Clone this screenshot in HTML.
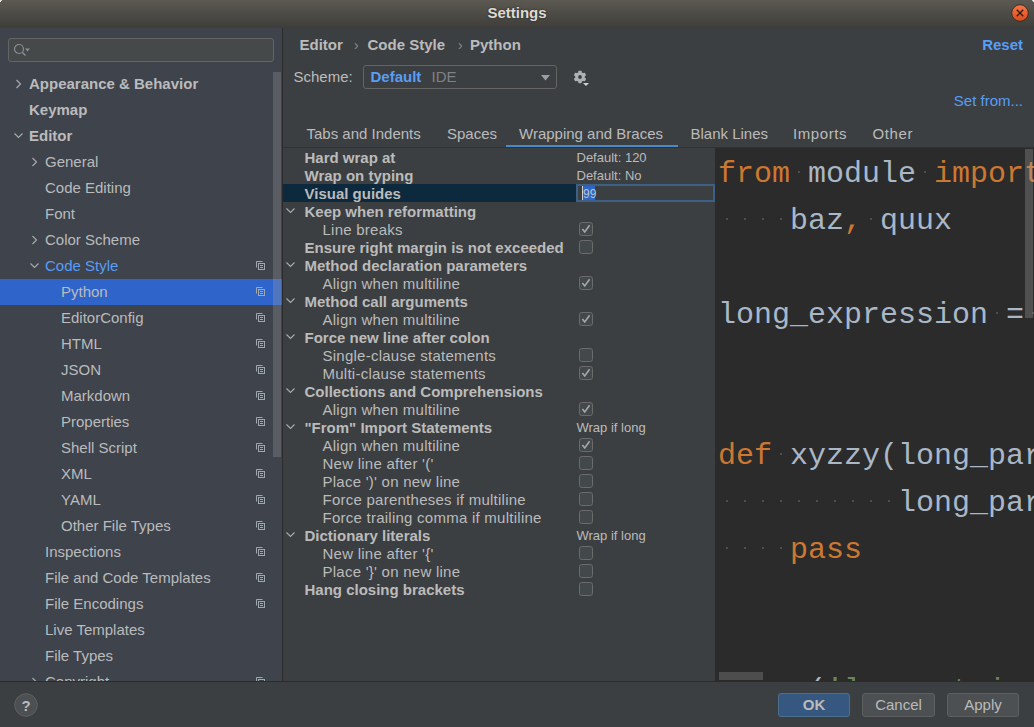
<!DOCTYPE html><html><head><meta charset="utf-8"><style>
html,body{margin:0;padding:0;width:1034px;height:727px;overflow:hidden;background:#3c3f41;}
.t{position:absolute;white-space:pre;line-height:normal;font-family:"Liberation Sans", sans-serif;}
.r{position:absolute;display:block;}
.ws{display:inline-block;width:18px;height:30px;position:relative;vertical-align:top;}
.ws i{position:absolute;left:8px;top:12px;width:2px;height:2px;background:#4e4e4e;}
</style></head><body>
<div class="r" style="left:0px;top:0px;width:1034px;height:28px;background:linear-gradient(#5b5951,#3e3d39);"></div>
<div class="t" style="left:217px;width:600px;text-align:center;top:4.42px;font-size:15px;color:#dfdbd2;font-weight:bold;text-shadow:0 0 2px #222;">Settings</div>
<svg class="r" style="left:1011px;top:4px" width="18" height="18" viewBox="0 0 18 18"><defs><linearGradient id="cg" x1="0" y1="0" x2="0" y2="1"><stop offset="0" stop-color="#f5784a"/><stop offset="1" stop-color="#dc4a1a"/></linearGradient></defs><circle cx="9" cy="9" r="8.3" fill="url(#cg)" stroke="#3a2e28" stroke-width="1"/><path d="M5.8 5.8 L12.2 12.2 M12.2 5.8 L5.8 12.2" stroke="#2a1a10" stroke-width="1.3"/></svg>
<div class="r" style="left:0px;top:0px;width:1px;height:2px;background:#e8e8e8;"></div>
<div class="r" style="left:1px;top:0px;width:1px;height:1px;background:#cfcfcf;"></div>
<div class="r" style="left:1033px;top:0px;width:1px;height:2px;background:#e8e8e8;"></div>
<div class="r" style="left:1032px;top:0px;width:1px;height:1px;background:#cfcfcf;"></div>
<div class="r" style="left:0px;top:28px;width:282px;height:653px;background:#3e434c;"></div>
<div class="r" style="left:282px;top:28px;width:1px;height:653px;background:#2b2b2b;"></div>
<div class="r" style="left:8px;top:38px;width:266px;height:24px;background:#45494a;box-sizing:border-box;border:1px solid #646464;border-radius:3px;"></div>
<svg class="r" style="left:13px;top:43px" width="20" height="16" viewBox="0 0 20 16"><circle cx="6" cy="6" r="4.5" fill="none" stroke="#8c8f93" stroke-width="1.2"/><path d="M9.2 9.2 L12.5 12.5" stroke="#8c8f93" stroke-width="1.3"/><path d="M12 5.6 L17 5.6 L14.5 8.6 Z" fill="#8c8f93"/></svg>
<div class="r" style="left:0;top:28px;width:282px;height:653px;overflow:hidden;">
<div class="t" style="left:29px;top:43px;height:26px;line-height:26px;font-size:15px;color:#bbbbbb;font-weight:bold;">Appearance &amp; Behavior</div>
<svg class="r" style="left:15px;top:51px" width="8" height="11" viewBox="0 0 8 11"><path d="M1.5 1 L5.5 5 L1.5 9" fill="none" stroke="#a6a9ad" stroke-width="1.2"/></svg>
<div class="t" style="left:29px;top:69px;height:26px;line-height:26px;font-size:15px;color:#bbbbbb;font-weight:bold;">Keymap</div>
<div class="t" style="left:29px;top:95px;height:26px;line-height:26px;font-size:15px;color:#bbbbbb;font-weight:bold;">Editor</div>
<svg class="r" style="left:14px;top:105px" width="10" height="6" viewBox="0 0 10 6"><path d="M0.5 0.5 L4.5 4.5 L8.5 0.5" fill="none" stroke="#a6a9ad" stroke-width="1.2"/></svg>
<div class="t" style="left:45px;top:121px;height:26px;line-height:26px;font-size:15px;color:#bbbbbb;">General</div>
<svg class="r" style="left:31px;top:129px" width="8" height="11" viewBox="0 0 8 11"><path d="M1.5 1 L5.5 5 L1.5 9" fill="none" stroke="#a6a9ad" stroke-width="1.2"/></svg>
<div class="t" style="left:45px;top:147px;height:26px;line-height:26px;font-size:15px;color:#bbbbbb;">Code Editing</div>
<div class="t" style="left:45px;top:173px;height:26px;line-height:26px;font-size:15px;color:#bbbbbb;">Font</div>
<div class="t" style="left:45px;top:199px;height:26px;line-height:26px;font-size:15px;color:#bbbbbb;">Color Scheme</div>
<svg class="r" style="left:31px;top:207px" width="8" height="11" viewBox="0 0 8 11"><path d="M1.5 1 L5.5 5 L1.5 9" fill="none" stroke="#a6a9ad" stroke-width="1.2"/></svg>
<div class="t" style="left:45px;top:225px;height:26px;line-height:26px;font-size:15px;color:#589df6;">Code Style</div>
<svg class="r" style="left:30px;top:235px" width="10" height="6" viewBox="0 0 10 6"><path d="M0.5 0.5 L4.5 4.5 L8.5 0.5" fill="none" stroke="#a6a9ad" stroke-width="1.2"/></svg>
<svg class="r" style="left:256px;top:233px" width="10" height="10" viewBox="0 0 10 10"><path d="M0.5 6.5 V0.5 H6.5" fill="none" stroke="#a0a8af" stroke-width="1"/><rect x="1.5" y="1.5" width="8" height="8" fill="#3e434c"/><rect x="2.5" y="2.5" width="6" height="6" fill="none" stroke="#a0a8af" stroke-width="1"/><path d="M4 4.5 H7 M4 6.5 H7" stroke="#a0a8af" stroke-width="1"/></svg>
<div class="r" style="left:0;top:251px;width:282px;height:26px;background:#2f65ca;"></div>
<div class="t" style="left:61px;top:251px;height:26px;line-height:26px;font-size:15px;color:#bbbbbb;">Python</div>
<svg class="r" style="left:256px;top:259px" width="10" height="10" viewBox="0 0 10 10"><path d="M0.5 6.5 V0.5 H6.5" fill="none" stroke="#a0a8af" stroke-width="1"/><rect x="1.5" y="1.5" width="8" height="8" fill="#2f65ca"/><rect x="2.5" y="2.5" width="6" height="6" fill="none" stroke="#a0a8af" stroke-width="1"/><path d="M4 4.5 H7 M4 6.5 H7" stroke="#a0a8af" stroke-width="1"/></svg>
<div class="t" style="left:61px;top:277px;height:26px;line-height:26px;font-size:15px;color:#bbbbbb;">EditorConfig</div>
<svg class="r" style="left:256px;top:285px" width="10" height="10" viewBox="0 0 10 10"><path d="M0.5 6.5 V0.5 H6.5" fill="none" stroke="#a0a8af" stroke-width="1"/><rect x="1.5" y="1.5" width="8" height="8" fill="#3e434c"/><rect x="2.5" y="2.5" width="6" height="6" fill="none" stroke="#a0a8af" stroke-width="1"/><path d="M4 4.5 H7 M4 6.5 H7" stroke="#a0a8af" stroke-width="1"/></svg>
<div class="t" style="left:61px;top:303px;height:26px;line-height:26px;font-size:15px;color:#bbbbbb;">HTML</div>
<svg class="r" style="left:256px;top:311px" width="10" height="10" viewBox="0 0 10 10"><path d="M0.5 6.5 V0.5 H6.5" fill="none" stroke="#a0a8af" stroke-width="1"/><rect x="1.5" y="1.5" width="8" height="8" fill="#3e434c"/><rect x="2.5" y="2.5" width="6" height="6" fill="none" stroke="#a0a8af" stroke-width="1"/><path d="M4 4.5 H7 M4 6.5 H7" stroke="#a0a8af" stroke-width="1"/></svg>
<div class="t" style="left:61px;top:329px;height:26px;line-height:26px;font-size:15px;color:#bbbbbb;">JSON</div>
<svg class="r" style="left:256px;top:337px" width="10" height="10" viewBox="0 0 10 10"><path d="M0.5 6.5 V0.5 H6.5" fill="none" stroke="#a0a8af" stroke-width="1"/><rect x="1.5" y="1.5" width="8" height="8" fill="#3e434c"/><rect x="2.5" y="2.5" width="6" height="6" fill="none" stroke="#a0a8af" stroke-width="1"/><path d="M4 4.5 H7 M4 6.5 H7" stroke="#a0a8af" stroke-width="1"/></svg>
<div class="t" style="left:61px;top:355px;height:26px;line-height:26px;font-size:15px;color:#bbbbbb;">Markdown</div>
<svg class="r" style="left:256px;top:363px" width="10" height="10" viewBox="0 0 10 10"><path d="M0.5 6.5 V0.5 H6.5" fill="none" stroke="#a0a8af" stroke-width="1"/><rect x="1.5" y="1.5" width="8" height="8" fill="#3e434c"/><rect x="2.5" y="2.5" width="6" height="6" fill="none" stroke="#a0a8af" stroke-width="1"/><path d="M4 4.5 H7 M4 6.5 H7" stroke="#a0a8af" stroke-width="1"/></svg>
<div class="t" style="left:61px;top:381px;height:26px;line-height:26px;font-size:15px;color:#bbbbbb;">Properties</div>
<svg class="r" style="left:256px;top:389px" width="10" height="10" viewBox="0 0 10 10"><path d="M0.5 6.5 V0.5 H6.5" fill="none" stroke="#a0a8af" stroke-width="1"/><rect x="1.5" y="1.5" width="8" height="8" fill="#3e434c"/><rect x="2.5" y="2.5" width="6" height="6" fill="none" stroke="#a0a8af" stroke-width="1"/><path d="M4 4.5 H7 M4 6.5 H7" stroke="#a0a8af" stroke-width="1"/></svg>
<div class="t" style="left:61px;top:407px;height:26px;line-height:26px;font-size:15px;color:#bbbbbb;">Shell Script</div>
<svg class="r" style="left:256px;top:415px" width="10" height="10" viewBox="0 0 10 10"><path d="M0.5 6.5 V0.5 H6.5" fill="none" stroke="#a0a8af" stroke-width="1"/><rect x="1.5" y="1.5" width="8" height="8" fill="#3e434c"/><rect x="2.5" y="2.5" width="6" height="6" fill="none" stroke="#a0a8af" stroke-width="1"/><path d="M4 4.5 H7 M4 6.5 H7" stroke="#a0a8af" stroke-width="1"/></svg>
<div class="t" style="left:61px;top:433px;height:26px;line-height:26px;font-size:15px;color:#bbbbbb;">XML</div>
<svg class="r" style="left:256px;top:441px" width="10" height="10" viewBox="0 0 10 10"><path d="M0.5 6.5 V0.5 H6.5" fill="none" stroke="#a0a8af" stroke-width="1"/><rect x="1.5" y="1.5" width="8" height="8" fill="#3e434c"/><rect x="2.5" y="2.5" width="6" height="6" fill="none" stroke="#a0a8af" stroke-width="1"/><path d="M4 4.5 H7 M4 6.5 H7" stroke="#a0a8af" stroke-width="1"/></svg>
<div class="t" style="left:61px;top:459px;height:26px;line-height:26px;font-size:15px;color:#bbbbbb;">YAML</div>
<svg class="r" style="left:256px;top:467px" width="10" height="10" viewBox="0 0 10 10"><path d="M0.5 6.5 V0.5 H6.5" fill="none" stroke="#a0a8af" stroke-width="1"/><rect x="1.5" y="1.5" width="8" height="8" fill="#3e434c"/><rect x="2.5" y="2.5" width="6" height="6" fill="none" stroke="#a0a8af" stroke-width="1"/><path d="M4 4.5 H7 M4 6.5 H7" stroke="#a0a8af" stroke-width="1"/></svg>
<div class="t" style="left:61px;top:485px;height:26px;line-height:26px;font-size:15px;color:#bbbbbb;">Other File Types</div>
<svg class="r" style="left:256px;top:493px" width="10" height="10" viewBox="0 0 10 10"><path d="M0.5 6.5 V0.5 H6.5" fill="none" stroke="#a0a8af" stroke-width="1"/><rect x="1.5" y="1.5" width="8" height="8" fill="#3e434c"/><rect x="2.5" y="2.5" width="6" height="6" fill="none" stroke="#a0a8af" stroke-width="1"/><path d="M4 4.5 H7 M4 6.5 H7" stroke="#a0a8af" stroke-width="1"/></svg>
<div class="t" style="left:45px;top:511px;height:26px;line-height:26px;font-size:15px;color:#bbbbbb;">Inspections</div>
<svg class="r" style="left:256px;top:519px" width="10" height="10" viewBox="0 0 10 10"><path d="M0.5 6.5 V0.5 H6.5" fill="none" stroke="#a0a8af" stroke-width="1"/><rect x="1.5" y="1.5" width="8" height="8" fill="#3e434c"/><rect x="2.5" y="2.5" width="6" height="6" fill="none" stroke="#a0a8af" stroke-width="1"/><path d="M4 4.5 H7 M4 6.5 H7" stroke="#a0a8af" stroke-width="1"/></svg>
<div class="t" style="left:45px;top:537px;height:26px;line-height:26px;font-size:15px;color:#bbbbbb;">File and Code Templates</div>
<svg class="r" style="left:256px;top:545px" width="10" height="10" viewBox="0 0 10 10"><path d="M0.5 6.5 V0.5 H6.5" fill="none" stroke="#a0a8af" stroke-width="1"/><rect x="1.5" y="1.5" width="8" height="8" fill="#3e434c"/><rect x="2.5" y="2.5" width="6" height="6" fill="none" stroke="#a0a8af" stroke-width="1"/><path d="M4 4.5 H7 M4 6.5 H7" stroke="#a0a8af" stroke-width="1"/></svg>
<div class="t" style="left:45px;top:563px;height:26px;line-height:26px;font-size:15px;color:#bbbbbb;">File Encodings</div>
<svg class="r" style="left:256px;top:571px" width="10" height="10" viewBox="0 0 10 10"><path d="M0.5 6.5 V0.5 H6.5" fill="none" stroke="#a0a8af" stroke-width="1"/><rect x="1.5" y="1.5" width="8" height="8" fill="#3e434c"/><rect x="2.5" y="2.5" width="6" height="6" fill="none" stroke="#a0a8af" stroke-width="1"/><path d="M4 4.5 H7 M4 6.5 H7" stroke="#a0a8af" stroke-width="1"/></svg>
<div class="t" style="left:45px;top:589px;height:26px;line-height:26px;font-size:15px;color:#bbbbbb;">Live Templates</div>
<div class="t" style="left:45px;top:615px;height:26px;line-height:26px;font-size:15px;color:#bbbbbb;">File Types</div>
<div class="t" style="left:45px;top:641px;height:26px;line-height:26px;font-size:15px;color:#bbbbbb;">Copyright</div>
<svg class="r" style="left:31px;top:649px" width="8" height="11" viewBox="0 0 8 11"><path d="M1.5 1 L5.5 5 L1.5 9" fill="none" stroke="#a6a9ad" stroke-width="1.2"/></svg>
<svg class="r" style="left:256px;top:649px" width="10" height="10" viewBox="0 0 10 10"><path d="M0.5 6.5 V0.5 H6.5" fill="none" stroke="#a0a8af" stroke-width="1"/><rect x="1.5" y="1.5" width="8" height="8" fill="#3e434c"/><rect x="2.5" y="2.5" width="6" height="6" fill="none" stroke="#a0a8af" stroke-width="1"/><path d="M4 4.5 H7 M4 6.5 H7" stroke="#a0a8af" stroke-width="1"/></svg>
</div>
<div class="r" style="left:273px;top:72px;width:8px;height:385px;background:rgba(166,166,166,0.28);"></div>
<div class="r" style="left:283px;top:28px;width:751px;height:653px;background:#3c3f41;"></div>
<div class="t" style="left:299.5px;top:35.92px;font-size:15px;color:#bbbbbb;font-weight:bold;">Editor</div>
<div class="t" style="left:354px;top:36.83px;font-size:14px;color:#8a8d90;">›</div>
<div class="t" style="left:367.5px;top:35.92px;font-size:15px;color:#bbbbbb;font-weight:bold;">Code Style</div>
<div class="t" style="left:458px;top:36.83px;font-size:14px;color:#8a8d90;">›</div>
<div class="t" style="left:470px;top:35.92px;font-size:15px;color:#bbbbbb;font-weight:bold;">Python</div>
<div class="t" style="right:11px;top:35.92px;font-size:15px;color:#589df6;font-weight:bold;">Reset</div>
<div class="t" style="left:293.5px;top:68.22px;font-size:15px;color:#bbbbbb;">Scheme:</div>
<div class="r" style="left:363px;top:65px;width:194px;height:24px;background:#3c3f41;box-sizing:border-box;border:1px solid #646464;border-radius:3px;"></div>
<div class="t" style="left:370.5px;top:68.22px;font-size:15px;color:#589df6;font-weight:bold;">Default</div>
<div class="t" style="left:431.5px;top:68.22px;font-size:15px;color:#7f8285;">IDE</div>
<svg class="r" style="left:541px;top:75px" width="10" height="6" viewBox="0 0 10 6"><path d="M0 0 H9 L4.5 5.5 Z" fill="#9a9da2"/></svg>
<svg class="r" style="left:570px;top:67px" width="22" height="22" viewBox="0 0 22 22"><g transform="translate(10,10)" fill="#afb1b3"><circle r="4.8"/><rect x="-1.7" y="-6.3" width="3.4" height="3.5" rx="0.8" transform="rotate(0)"/><rect x="-1.7" y="-6.3" width="3.4" height="3.5" rx="0.8" transform="rotate(60)"/><rect x="-1.7" y="-6.3" width="3.4" height="3.5" rx="0.8" transform="rotate(120)"/><rect x="-1.7" y="-6.3" width="3.4" height="3.5" rx="0.8" transform="rotate(180)"/><rect x="-1.7" y="-6.3" width="3.4" height="3.5" rx="0.8" transform="rotate(240)"/><rect x="-1.7" y="-6.3" width="3.4" height="3.5" rx="0.8" transform="rotate(300)"/><circle r="1.9" fill="#3c3f41"/></g><path d="M13 16 H19 L16 19 Z" fill="#d0d2d4"/></svg>
<div class="t" style="right:11px;top:91.92px;font-size:15px;color:#589df6;">Set from...</div>
<div class="t" style="left:306.5px;top:124.92px;font-size:15px;color:#bbbbbb;">Tabs and Indents</div>
<div class="t" style="left:447px;top:124.92px;font-size:15px;color:#bbbbbb;">Spaces</div>
<div class="t" style="left:519px;top:124.92px;font-size:15px;color:#bbbbbb;">Wrapping and Braces</div>
<div class="t" style="left:690.5px;top:124.92px;font-size:15px;color:#bbbbbb;">Blank Lines</div>
<div class="t" style="left:793px;top:124.92px;font-size:15px;color:#bbbbbb;letter-spacing:0.6px;">Imports</div>
<div class="t" style="left:872.5px;top:124.92px;font-size:15px;color:#bbbbbb;letter-spacing:0.6px;">Other</div>
<div class="r" style="left:506px;top:145px;width:172px;height:3px;background:#4a88c7;"></div>
<div class="r" style="left:283px;top:147px;width:751px;height:1px;background:#323232;"></div>
<div class="t" style="left:304.5px;top:149px;height:18px;line-height:18px;font-size:15px;color:#bbbbbb;font-weight:bold;">Hard wrap at</div>
<div class="t" style="left:576.5px;top:149px;height:18px;line-height:18px;font-size:13px;color:#bbbbbb;">Default: 120</div>
<div class="t" style="left:304.5px;top:167px;height:18px;line-height:18px;font-size:15px;color:#bbbbbb;font-weight:bold;">Wrap on typing</div>
<div class="t" style="left:576.5px;top:167px;height:18px;line-height:18px;font-size:13px;color:#bbbbbb;">Default: No</div>
<div class="r" style="left:283px;top:184px;width:293px;height:18px;background:#0d293e;"></div>
<div class="t" style="left:304.5px;top:185px;height:18px;line-height:18px;font-size:15px;color:#bbbbbb;font-weight:bold;">Visual guides</div>
<div class="r" style="left:576px;top:184px;width:139px;height:18px;background:#3c3f41;box-sizing:border-box;border:2px solid #3d6185;"></div>
<div class="r" style="left:583px;top:186px;width:12px;height:14px;background:#2f65ca;"></div>
<div class="r" style="left:582px;top:186px;width:1px;height:14px;background:#cfcfcf;"></div>
<div class="t" style="left:583px;top:185px;height:18px;line-height:18px;font-size:12px;color:#b8c4d0;">99</div>
<div class="t" style="left:304.5px;top:203px;height:18px;line-height:18px;font-size:15px;color:#bbbbbb;font-weight:bold;">Keep when reformatting</div>
<svg class="r" style="left:286px;top:207.5px" width="10" height="6" viewBox="0 0 10 6"><path d="M0.5 0.5 L4.5 4.5 L8.5 0.5" fill="none" stroke="#a6a9ad" stroke-width="1.2"/></svg>
<div class="t" style="left:322.5px;top:221px;height:18px;line-height:18px;font-size:15px;color:#bbbbbb;letter-spacing:0.25px;">Line breaks</div>
<svg class="r" style="left:579px;top:222px" width="14" height="14" viewBox="0 0 14 14"><rect x="0.5" y="0.5" width="13" height="13" rx="2.2" fill="#43494a" stroke="#6b6b6b"/><path d="M3.4 7 L5.7 10 L10.6 3.3" fill="none" stroke="#a7a7a7" stroke-width="1.6"/></svg>
<div class="t" style="left:304.5px;top:239px;height:18px;line-height:18px;font-size:15px;color:#bbbbbb;font-weight:bold;">Ensure right margin is not exceeded</div>
<svg class="r" style="left:579px;top:240px" width="14" height="14" viewBox="0 0 14 14"><rect x="0.5" y="0.5" width="13" height="13" rx="2.2" fill="#43494a" stroke="#6b6b6b"/></svg>
<div class="t" style="left:304.5px;top:257px;height:18px;line-height:18px;font-size:15px;color:#bbbbbb;font-weight:bold;">Method declaration parameters</div>
<svg class="r" style="left:286px;top:261.5px" width="10" height="6" viewBox="0 0 10 6"><path d="M0.5 0.5 L4.5 4.5 L8.5 0.5" fill="none" stroke="#a6a9ad" stroke-width="1.2"/></svg>
<div class="t" style="left:322.5px;top:275px;height:18px;line-height:18px;font-size:15px;color:#bbbbbb;letter-spacing:0.25px;">Align when multiline</div>
<svg class="r" style="left:579px;top:276px" width="14" height="14" viewBox="0 0 14 14"><rect x="0.5" y="0.5" width="13" height="13" rx="2.2" fill="#43494a" stroke="#6b6b6b"/><path d="M3.4 7 L5.7 10 L10.6 3.3" fill="none" stroke="#a7a7a7" stroke-width="1.6"/></svg>
<div class="t" style="left:304.5px;top:293px;height:18px;line-height:18px;font-size:15px;color:#bbbbbb;font-weight:bold;">Method call arguments</div>
<svg class="r" style="left:286px;top:297.5px" width="10" height="6" viewBox="0 0 10 6"><path d="M0.5 0.5 L4.5 4.5 L8.5 0.5" fill="none" stroke="#a6a9ad" stroke-width="1.2"/></svg>
<div class="t" style="left:322.5px;top:311px;height:18px;line-height:18px;font-size:15px;color:#bbbbbb;letter-spacing:0.25px;">Align when multiline</div>
<svg class="r" style="left:579px;top:312px" width="14" height="14" viewBox="0 0 14 14"><rect x="0.5" y="0.5" width="13" height="13" rx="2.2" fill="#43494a" stroke="#6b6b6b"/><path d="M3.4 7 L5.7 10 L10.6 3.3" fill="none" stroke="#a7a7a7" stroke-width="1.6"/></svg>
<div class="t" style="left:304.5px;top:329px;height:18px;line-height:18px;font-size:15px;color:#bbbbbb;font-weight:bold;">Force new line after colon</div>
<svg class="r" style="left:286px;top:333.5px" width="10" height="6" viewBox="0 0 10 6"><path d="M0.5 0.5 L4.5 4.5 L8.5 0.5" fill="none" stroke="#a6a9ad" stroke-width="1.2"/></svg>
<div class="t" style="left:322.5px;top:347px;height:18px;line-height:18px;font-size:15px;color:#bbbbbb;letter-spacing:0.25px;">Single-clause statements</div>
<svg class="r" style="left:579px;top:348px" width="14" height="14" viewBox="0 0 14 14"><rect x="0.5" y="0.5" width="13" height="13" rx="2.2" fill="#43494a" stroke="#6b6b6b"/></svg>
<div class="t" style="left:322.5px;top:365px;height:18px;line-height:18px;font-size:15px;color:#bbbbbb;letter-spacing:0.25px;">Multi-clause statements</div>
<svg class="r" style="left:579px;top:366px" width="14" height="14" viewBox="0 0 14 14"><rect x="0.5" y="0.5" width="13" height="13" rx="2.2" fill="#43494a" stroke="#6b6b6b"/><path d="M3.4 7 L5.7 10 L10.6 3.3" fill="none" stroke="#a7a7a7" stroke-width="1.6"/></svg>
<div class="t" style="left:304.5px;top:383px;height:18px;line-height:18px;font-size:15px;color:#bbbbbb;font-weight:bold;">Collections and Comprehensions</div>
<svg class="r" style="left:286px;top:387.5px" width="10" height="6" viewBox="0 0 10 6"><path d="M0.5 0.5 L4.5 4.5 L8.5 0.5" fill="none" stroke="#a6a9ad" stroke-width="1.2"/></svg>
<div class="t" style="left:322.5px;top:401px;height:18px;line-height:18px;font-size:15px;color:#bbbbbb;letter-spacing:0.25px;">Align when multiline</div>
<svg class="r" style="left:579px;top:402px" width="14" height="14" viewBox="0 0 14 14"><rect x="0.5" y="0.5" width="13" height="13" rx="2.2" fill="#43494a" stroke="#6b6b6b"/><path d="M3.4 7 L5.7 10 L10.6 3.3" fill="none" stroke="#a7a7a7" stroke-width="1.6"/></svg>
<div class="t" style="left:304.5px;top:419px;height:18px;line-height:18px;font-size:15px;color:#bbbbbb;font-weight:bold;">"From" Import Statements</div>
<svg class="r" style="left:286px;top:423.5px" width="10" height="6" viewBox="0 0 10 6"><path d="M0.5 0.5 L4.5 4.5 L8.5 0.5" fill="none" stroke="#a6a9ad" stroke-width="1.2"/></svg>
<div class="t" style="left:576.5px;top:419px;height:18px;line-height:18px;font-size:13px;color:#bbbbbb;">Wrap if long</div>
<div class="t" style="left:322.5px;top:437px;height:18px;line-height:18px;font-size:15px;color:#bbbbbb;letter-spacing:0.25px;">Align when multiline</div>
<svg class="r" style="left:579px;top:438px" width="14" height="14" viewBox="0 0 14 14"><rect x="0.5" y="0.5" width="13" height="13" rx="2.2" fill="#43494a" stroke="#6b6b6b"/><path d="M3.4 7 L5.7 10 L10.6 3.3" fill="none" stroke="#a7a7a7" stroke-width="1.6"/></svg>
<div class="t" style="left:322.5px;top:455px;height:18px;line-height:18px;font-size:15px;color:#bbbbbb;letter-spacing:0.25px;">New line after '('</div>
<svg class="r" style="left:579px;top:456px" width="14" height="14" viewBox="0 0 14 14"><rect x="0.5" y="0.5" width="13" height="13" rx="2.2" fill="#43494a" stroke="#6b6b6b"/></svg>
<div class="t" style="left:322.5px;top:473px;height:18px;line-height:18px;font-size:15px;color:#bbbbbb;letter-spacing:0.25px;">Place ')' on new line</div>
<svg class="r" style="left:579px;top:474px" width="14" height="14" viewBox="0 0 14 14"><rect x="0.5" y="0.5" width="13" height="13" rx="2.2" fill="#43494a" stroke="#6b6b6b"/></svg>
<div class="t" style="left:322.5px;top:491px;height:18px;line-height:18px;font-size:15px;color:#bbbbbb;letter-spacing:0.25px;">Force parentheses if multiline</div>
<svg class="r" style="left:579px;top:492px" width="14" height="14" viewBox="0 0 14 14"><rect x="0.5" y="0.5" width="13" height="13" rx="2.2" fill="#43494a" stroke="#6b6b6b"/></svg>
<div class="t" style="left:322.5px;top:509px;height:18px;line-height:18px;font-size:15px;color:#bbbbbb;letter-spacing:0.25px;">Force trailing comma if multiline</div>
<svg class="r" style="left:579px;top:510px" width="14" height="14" viewBox="0 0 14 14"><rect x="0.5" y="0.5" width="13" height="13" rx="2.2" fill="#43494a" stroke="#6b6b6b"/></svg>
<div class="t" style="left:304.5px;top:527px;height:18px;line-height:18px;font-size:15px;color:#bbbbbb;font-weight:bold;">Dictionary literals</div>
<svg class="r" style="left:286px;top:531.5px" width="10" height="6" viewBox="0 0 10 6"><path d="M0.5 0.5 L4.5 4.5 L8.5 0.5" fill="none" stroke="#a6a9ad" stroke-width="1.2"/></svg>
<div class="t" style="left:576.5px;top:527px;height:18px;line-height:18px;font-size:13px;color:#bbbbbb;">Wrap if long</div>
<div class="t" style="left:322.5px;top:545px;height:18px;line-height:18px;font-size:15px;color:#bbbbbb;letter-spacing:0.25px;">New line after '{'</div>
<svg class="r" style="left:579px;top:546px" width="14" height="14" viewBox="0 0 14 14"><rect x="0.5" y="0.5" width="13" height="13" rx="2.2" fill="#43494a" stroke="#6b6b6b"/></svg>
<div class="t" style="left:322.5px;top:563px;height:18px;line-height:18px;font-size:15px;color:#bbbbbb;letter-spacing:0.25px;">Place '}' on new line</div>
<svg class="r" style="left:579px;top:564px" width="14" height="14" viewBox="0 0 14 14"><rect x="0.5" y="0.5" width="13" height="13" rx="2.2" fill="#43494a" stroke="#6b6b6b"/></svg>
<div class="t" style="left:304.5px;top:581px;height:18px;line-height:18px;font-size:15px;color:#bbbbbb;font-weight:bold;">Hang closing brackets</div>
<svg class="r" style="left:579px;top:582px" width="14" height="14" viewBox="0 0 14 14"><rect x="0.5" y="0.5" width="13" height="13" rx="2.2" fill="#43494a" stroke="#6b6b6b"/></svg>
<div class="r" style="left:715px;top:148px;width:319px;height:533px;background:#2b2b2b;overflow:hidden;">
<div class="t" style="left:3px;top:11.1px;font-family:'Liberation Mono', monospace;font-size:30px;line-height:30px;"><span style="color:#cc7832">from</span><span class="ws"><i></i></span><span style="color:#a9b7c6">module</span><span class="ws"><i></i></span><span style="color:#cc7832">import</span></div>
<div class="t" style="left:3px;top:58.1px;font-family:'Liberation Mono', monospace;font-size:30px;line-height:30px;"><span class="ws"><i></i></span><span class="ws"><i></i></span><span class="ws"><i></i></span><span class="ws"><i></i></span><span style="color:#a9b7c6">baz</span><span style="color:#cc7832">,</span><span class="ws"><i></i></span><span style="color:#a9b7c6">quux</span></div>
<div class="t" style="left:3px;top:105.1px;font-family:'Liberation Mono', monospace;font-size:30px;line-height:30px;"></div>
<div class="t" style="left:3px;top:152.1px;font-family:'Liberation Mono', monospace;font-size:30px;line-height:30px;"><span style="color:#a9b7c6">long_expression</span><span class="ws"><i></i></span><span style="color:#a9b7c6">=</span><span class="ws"><i></i></span><span style="color:#a9b7c6">component_one</span></div>
<div class="t" style="left:3px;top:199.1px;font-family:'Liberation Mono', monospace;font-size:30px;line-height:30px;"></div>
<div class="t" style="left:3px;top:246.1px;font-family:'Liberation Mono', monospace;font-size:30px;line-height:30px;"></div>
<div class="t" style="left:3px;top:293.1px;font-family:'Liberation Mono', monospace;font-size:30px;line-height:30px;"><span style="color:#cc7832">def</span><span class="ws"><i></i></span><span style="color:#a9b7c6">xyzzy(long_parameter_1,</span></div>
<div class="t" style="left:3px;top:340.1px;font-family:'Liberation Mono', monospace;font-size:30px;line-height:30px;"><span class="ws"><i></i></span><span class="ws"><i></i></span><span class="ws"><i></i></span><span class="ws"><i></i></span><span class="ws"><i></i></span><span class="ws"><i></i></span><span class="ws"><i></i></span><span class="ws"><i></i></span><span class="ws"><i></i></span><span class="ws"><i></i></span><span style="color:#a9b7c6">long_parameter_2):</span></div>
<div class="t" style="left:3px;top:387.1px;font-family:'Liberation Mono', monospace;font-size:30px;line-height:30px;"><span class="ws"><i></i></span><span class="ws"><i></i></span><span class="ws"><i></i></span><span class="ws"><i></i></span><span style="color:#cc7832">pass</span></div>
<div class="t" style="left:3px;top:434.1px;font-family:'Liberation Mono', monospace;font-size:30px;line-height:30px;"></div>
<div class="t" style="left:3px;top:481.1px;font-family:'Liberation Mono', monospace;font-size:30px;line-height:30px;"></div>
<div class="t" style="left:3px;top:528.1px;font-family:'Liberation Mono', monospace;font-size:30px;line-height:30px;"><span style="color:#a9b7c6">xyzzy(</span><span style="color:#6a8759">'long_string_constant1'</span><span style="color:#cc7832">,</span></div>
</div>
<div class="r" style="left:1025px;top:149px;width:8px;height:169px;background:rgba(166,166,166,0.3);"></div>
<div class="r" style="left:719px;top:672px;width:44px;height:8px;background:#4d4d4d;"></div>
<div class="r" style="left:0px;top:681px;width:1034px;height:1px;background:#2b2b2b;"></div>
<div class="r" style="left:0px;top:682px;width:1034px;height:45px;background:#3c3f41;"></div>
<svg class="r" style="left:14px;top:693px" width="24" height="24" viewBox="0 0 24 24"><circle cx="12" cy="12" r="11.3" fill="#4c5052" stroke="#5e6060" stroke-width="1"/></svg>
<div class="t" style="left:-274px;width:600px;text-align:center;top:697.42px;font-size:15px;color:#bbbbbb;font-weight:bold;">?</div>
<div class="r" style="left:778px;top:693px;width:72px;height:24px;box-sizing:border-box;background:#365880;border:1px solid #4c708c;border-radius:3px;"></div>
<div class="t" style="left:514.0px;width:600px;text-align:center;top:696.22px;font-size:15px;color:#bbbbbb;font-weight:bold;">OK</div>
<div class="r" style="left:862px;top:693px;width:73px;height:24px;box-sizing:border-box;background:#4c5052;border:1px solid #5e6060;border-radius:3px;"></div>
<div class="t" style="left:598.5px;width:600px;text-align:center;top:696.22px;font-size:15px;color:#bbbbbb;">Cancel</div>
<div class="r" style="left:947px;top:693px;width:72px;height:24px;box-sizing:border-box;background:#4c5052;border:1px solid #5e6060;border-radius:3px;"></div>
<div class="t" style="left:683.0px;width:600px;text-align:center;top:696.22px;font-size:15px;color:#bbbbbb;">Apply</div>
</body></html>
